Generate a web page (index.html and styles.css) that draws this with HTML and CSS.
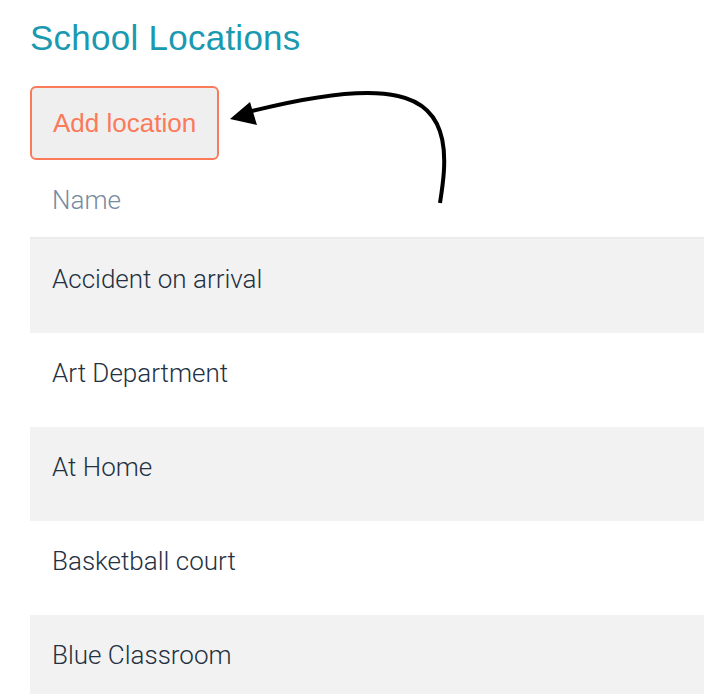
FILE: index.html
```html
<!DOCTYPE html>
<html lang="en">
<head>
<meta charset="utf-8">
<title>School Locations</title>
<link rel="stylesheet" href="styles.css">
</head>
<body>
<div class="page">
  <h1 class="title">School Locations</h1>
  <button class="add-btn" type="button">Add location</button>
  <div class="table">
    <div class="thead">Name</div>
    <div class="row odd">Accident on arrival</div>
    <div class="row">Art Department</div>
    <div class="row odd">At Home</div>
    <div class="row">Basketball court</div>
    <div class="row odd">Blue Classroom</div>
  </div>
  <svg class="annotation" width="704" height="694" viewBox="0 0 704 694" aria-hidden="true">
    <path d="M440 203 C446 165 454 108 398 96 C365 88 312 96 252 111" fill="none" stroke="#000" stroke-width="4" stroke-linecap="butt"/>
    <polygon points="230,119 250,102 257,125" fill="#000"/>
  </svg>
</div>
</body>
</html>
```
FILE: styles.css
```css
html, body {
  margin: 0;
  padding: 0;
  background: #ffffff;
}

.page {
  position: relative;
  padding: 18px 0 0 30px;
  overflow: hidden;
  height: 676px;
}

.title {
  margin: 0;
  font-family: "Liberation Sans", Arial, sans-serif;
  font-size: 35px;
  font-weight: normal;
  letter-spacing: 0.25px;
  line-height: 40px;
  color: #1a99b0;
}

.add-btn {
  display: block;
  margin-top: 28px;
  box-sizing: border-box;
  height: 74px;
  padding: 0 21px;
  border: 2px solid #fb7a5a;
  border-radius: 6px;
  background: #efefef;
  color: #fb7a5a;
  font-family: "Liberation Sans", Arial, sans-serif;
  font-size: 26px;
  line-height: 30px;
}

.table {
  font-family: Roboto, "Noto Sans", sans-serif;
  font-size: 26px;
  font-weight: 300;
  line-height: 30px;
}

.thead {
  box-sizing: border-box;
  height: 79px;
  padding: 25px 22px 0;
  color: #788aa0;
  border-bottom: 2px solid #ebebee;
}

.row {
  box-sizing: border-box;
  height: 94px;
  padding: 25px 22px 0;
  color: #1f3142;
  background: #ffffff;
}

.row.odd {
  background: #f2f2f2;
}

.annotation {
  position: absolute;
  left: 0;
  top: 0;
  pointer-events: none;
}
```
